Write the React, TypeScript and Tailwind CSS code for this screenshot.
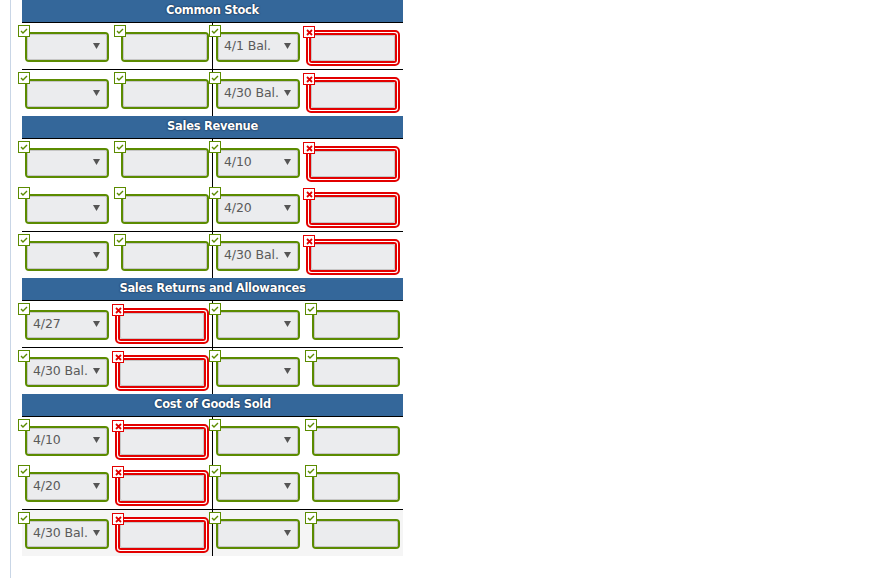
import React from 'react'

type CellDef = { value?: string; ok: boolean }
type RowDef = { cells: [CellDef, CellDef, CellDef, CellDef]; line?: boolean; shaded?: boolean }
type Section = { title: string; rows: RowDef[] }

// A = select (left), B = amount (left), C = select (right), D = amount (right)
const sections: Section[] = [
  {
    title: 'Common Stock',
    rows: [
      { cells: [{ ok: true }, { ok: true }, { ok: true, value: '4/1 Bal.' }, { ok: false }] },
      { line: true, cells: [{ ok: true }, { ok: true }, { ok: true, value: '4/30 Bal.' }, { ok: false }] },
    ],
  },
  {
    title: 'Sales Revenue',
    rows: [
      { cells: [{ ok: true }, { ok: true }, { ok: true, value: '4/10' }, { ok: false }] },
      { cells: [{ ok: true }, { ok: true }, { ok: true, value: '4/20' }, { ok: false }] },
      { line: true, cells: [{ ok: true }, { ok: true }, { ok: true, value: '4/30 Bal.' }, { ok: false }] },
    ],
  },
  {
    title: 'Sales Returns and Allowances',
    rows: [
      { cells: [{ ok: true, value: '4/27' }, { ok: false }, { ok: true }, { ok: true }] },
      { line: true, cells: [{ ok: true, value: '4/30 Bal.' }, { ok: false }, { ok: true }, { ok: true }] },
    ],
  },
  {
    title: 'Cost of Goods Sold',
    rows: [
      { cells: [{ ok: true, value: '4/10' }, { ok: false }, { ok: true }, { ok: true }] },
      { cells: [{ ok: true, value: '4/20' }, { ok: false }, { ok: true }, { ok: true }] },
      { line: true, shaded: true, cells: [{ ok: true, value: '4/30 Bal.' }, { ok: false }, { ok: true }, { ok: true }] },
    ],
  },
]

function Mark({ ok }: { ok: boolean }) {
  if (ok) {
    return (
      <span className="flex h-[12px] w-[12px] items-center justify-center border border-[#5b8b00] bg-white">
        <svg width="8" height="6" viewBox="0 0 8 6">
          <polyline points="1,3 3,5 7,1" fill="none" stroke="#5b8b00" strokeWidth="1.4" />
        </svg>
      </span>
    )
  }
  return (
    <span className="flex h-[12px] w-[12px] items-center justify-center border border-[#e30000] bg-white">
      <svg width="7" height="7" viewBox="0 0 7 7">
        <path d="M1 1 L6 6 M6 1 L1 6" stroke="#e30000" strokeWidth="1.8" />
      </svg>
    </span>
  )
}

function Arrow() {
  return (
    <svg width="7" height="6" viewBox="0 0 7 6" className="shrink-0">
      <path d="M0 0 H7 L3.5 6 Z" fill="#555" />
    </svg>
  )
}

function Field({ select, value }: { select?: boolean; value?: string }) {
  return (
    <div className="flex h-full items-center justify-between rounded-[2px] border border-[#c6c6c6] bg-[#ebecee] pb-[2px] pl-[5px] pr-[6px] text-[12.5px] tracking-[-0.1px] text-[#5a5a5a] [font-family:'DejaVu_Sans',Verdana,sans-serif]">
      <span className="whitespace-nowrap">{value ?? ''}</span>
      {select && <Arrow />}
    </div>
  )
}

function SelectCell({ cell }: { cell: CellDef }) {
  return (
    <div className="relative ml-[3px] mt-[9px] h-[30px] w-[84px] rounded-[4px] border-2 border-[#5b8b00]">
      <Field select value={cell.value} />
      <div className="absolute left-[-9px] top-[-9px]">
        <Mark ok />
      </div>
    </div>
  )
}

function AmountCell({ cell }: { cell: CellDef }) {
  if (cell.ok) {
    return (
      <div className="ml-[6px] w-[94px]">
        <div className="relative ml-[6px] mt-[9px] h-[30px] w-[88px] rounded-[4px] border-2 border-[#5b8b00]">
          <Field />
          <div className="absolute left-[-9px] top-[-9px]">
            <Mark ok />
          </div>
        </div>
      </div>
    )
  }
  return (
    <div className="ml-[6px] w-[94px]">
      <div className="relative mt-[7px] h-[36px] w-[94px] rounded-[5px] border-2 border-[#e30000] bg-white p-[1px]">
        <div className="h-full rounded-[3px] border-2 border-[#e30000]">
          <Field />
        </div>
        <div className="absolute left-[-5px] top-[-6px]">
          <Mark ok={false} />
        </div>
      </div>
    </div>
  )
}

function Row({ row }: { row: RowDef }) {
  const [a, b, c, d] = row.cells
  return (
    <div className={`flex ${row.line ? 'border-t border-black' : ''} ${row.shaded ? 'bg-[#f5f5f5]' : 'bg-white'}`}>
      <div className="flex h-[46px] w-[191px] items-start border-r border-black">
        <SelectCell cell={a} />
        <AmountCell cell={b} />
      </div>
      <div className="flex h-[46px] flex-1 items-start">
        <SelectCell cell={c} />
        <AmountCell cell={d} />
      </div>
    </div>
  )
}

export default function App() {
  return (
    <div className="h-[578px] bg-white pl-[10px]">
      <div className="h-full border-l border-[#c9d6e6] pl-[11px]">
        <div className="w-[381px]">
          {sections.map((s) => (
            <div key={s.title}>
              <div className="flex h-[23px] items-center justify-center border-b border-black bg-[#34679a] text-[11.5px] font-bold tracking-[-0.3px] text-white [font-family:'DejaVu_Sans',Verdana,sans-serif] [text-shadow:0_0_1px_#0a2040,0_0_2px_rgba(0,0,0,0.5)]">
                {s.title}
              </div>
              {s.rows.map((r, i) => (
                <Row key={i} row={r} />
              ))}
            </div>
          ))}
        </div>
      </div>
    </div>
  )
}
